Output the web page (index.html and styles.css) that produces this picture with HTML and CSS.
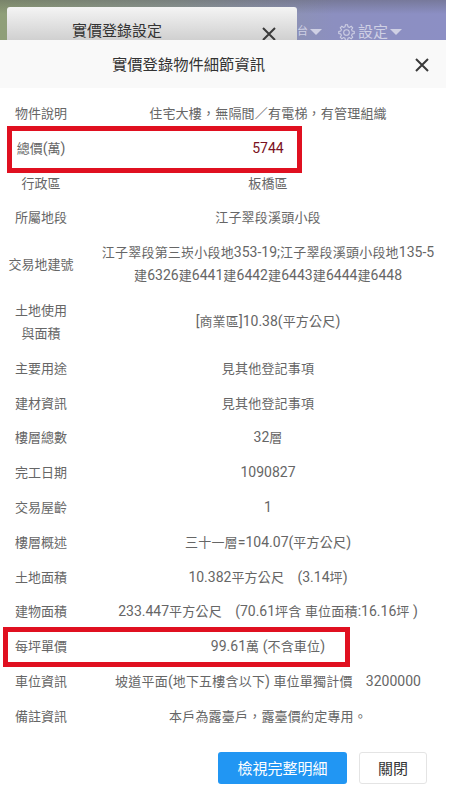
FILE: index.html
```html
<!DOCTYPE html>
<html lang="zh-Hant">
<head>
<meta charset="utf-8">
<title>實價登錄物件細節資訊</title>
<link rel="stylesheet" href="styles.css">
</head>
<body>
<div class="screen">
  <div class="backdrop">
    <div class="back-modal">
      <span class="back-title">實價登錄設定</span>
      <svg class="x back-x" viewBox="0 0 14 14"><path d="M1 1L13 13M13 1L1 13"/></svg>
    </div>
    <div class="back-menu">
      <span class="menu-item small">台<i class="tri"></i></span>
      <span class="menu-item">
        <svg class="gear" viewBox="0 0 24 24"><circle cx="12" cy="12" r="4"/><path d="M20.02 9.85L22.89 10.47L22.89 13.53L20.02 14.15L19.19 16.15L20.78 18.62L18.62 20.78L16.15 19.19L14.15 20.02L13.53 22.89L10.47 22.89L9.85 20.02L7.85 19.19L5.38 20.78L3.22 18.62L4.81 16.15L3.98 14.15L1.11 13.53L1.11 10.47L3.98 9.85L4.81 7.85L3.22 5.38L5.38 3.22L7.85 4.81L9.85 3.98L10.47 1.11L13.53 1.11L14.15 3.98L16.15 4.81L18.62 3.22L20.78 5.38L19.19 7.85Z"/></svg>
        設定<i class="tri"></i>
      </span>
    </div>
  </div>
  <header class="head">
    <h1 class="title">實價登錄物件細節資訊</h1>
    <svg class="x head-x" viewBox="0 0 14 14"><path d="M1 1L13 13M13 1L1 13"/></svg>
  </header>
  <section class="list">
    <div class="row"><div class="key">物件說明</div><div class="val">住宅大樓，無隔間／有電梯，有管理組織</div></div>
    <div class="row"><div class="key">總價<span class="n">(</span>萬<span class="n">)</span></div><div class="val price"><span class="n">5744</span></div><span class="mark mark-a"></span></div>
    <div class="row"><div class="key">行政區</div><div class="val">板橋區</div></div>
    <div class="row"><div class="key">所屬地段</div><div class="val">江子翠段溪頭小段</div></div>
    <div class="row"><div class="key">交易地建號</div><div class="val">江子翠段第三崁小段地<span class="n">353-19;</span>江子翠段溪頭小段地<span class="n">135-5</span><br>建<span class="n">6326</span>建<span class="n">6441</span>建<span class="n">6442</span>建<span class="n">6443</span>建<span class="n">6444</span>建<span class="n">6448</span></div></div>
    <div class="row"><div class="key">土地使用<br>與面積</div><div class="val"><span class="n">[</span>商業區<span class="n">]10.38(</span>平方公尺<span class="n">)</span></div></div>
    <div class="row"><div class="key">主要用途</div><div class="val">見其他登記事項</div></div>
    <div class="row"><div class="key">建材資訊</div><div class="val">見其他登記事項</div></div>
    <div class="row"><div class="key">樓層總數</div><div class="val"><span class="n">32</span>層</div></div>
    <div class="row"><div class="key">完工日期</div><div class="val"><span class="n">1090827</span></div></div>
    <div class="row"><div class="key">交易屋齡</div><div class="val"><span class="n">1</span></div></div>
    <div class="row"><div class="key">樓層概述</div><div class="val">三十一層<span class="n">=104.07(</span>平方公尺<span class="n">)</span></div></div>
    <div class="row"><div class="key">土地面積</div><div class="val"><span class="n">10.382</span>平方公尺　<span class="n">(3.14</span>坪<span class="n">)</span></div></div>
    <div class="row"><div class="key">建物面積</div><div class="val"><span class="n">233.447</span>平方公尺　<span class="n">(70.61</span>坪含 車位面積<span class="n">:16.16</span>坪 <span class="n">)</span></div></div>
    <div class="row"><div class="key">每坪單價</div><div class="val"><span class="n">99.61</span>萬 <span class="n">(</span>不含車位<span class="n">)</span></div><span class="mark mark-b"></span></div>
    <div class="row"><div class="key">車位資訊</div><div class="val">坡道平面<span class="n">(</span>地下五樓含以下<span class="n">)</span> 車位單獨計價　<span class="n">3200000</span></div></div>
    <div class="row"><div class="key">備註資訊</div><div class="val">本戶為露臺戶，露臺價約定專用。</div></div>
  </section>
  <footer class="foot">
    <button class="btn primary">檢視完整明細</button>
    <button class="btn plain">關閉</button>
  </footer>
</div>
</body>
</html>
```
FILE: styles.css
```css
* { box-sizing: border-box; }
html, body { margin: 0; padding: 0; background: #fff; }
body { font-family: Roboto, "Noto Sans CJK TC", sans-serif; color: #666; font-size: 13px; }
.screen { width: 446px; height: 792px; overflow: hidden; background: #fff; }

.backdrop { position: relative; height: 40px; background: linear-gradient(rgba(80, 80, 80, .35), rgba(80, 80, 80, 0) 35%), linear-gradient(90deg, #8f9f78 0%, #8f9a98 40%, #8c8fc0 75%, #8c8fc4 100%); }
.back-modal { position: absolute; left: 7px; top: 7px; width: 290px; height: 33px; border-radius: 3px 3px 0 0; background: linear-gradient(#f4f4f4, #d0d0d0); }
.back-title { position: absolute; left: 65px; top: 13px; font-size: 15px; line-height: 22px; color: #333; }
.back-x { position: absolute; left: 255px; top: 20px; }
.back-menu { position: absolute; left: 297px; top: 22px; display: flex; gap: 15px; color: #cfd0e4; font-size: 15px; line-height: 20px; }
.menu-item { display: flex; align-items: center; }
.small { font-size: 11px; width: 26px; }
.tri { width: 0; height: 0; border-left: 6.5px solid transparent; border-right: 6.5px solid transparent; border-top: 6px solid #cfd0e4; margin-left: 2px; }
.gear { width: 17px; height: 17px; margin-right: 3px; fill: none; stroke: #cfd0e4; stroke-width: 1.5; }

.x { width: 14px; height: 14px; fill: none; stroke: #3a3a3a; stroke-width: 2; }
.head { position: relative; height: 48px; background: #f9f9f9; display: flex; align-items: center; }
.title { margin: 2px 0 0; width: 377px; text-align: center; font-size: 15.3px; font-weight: 400; line-height: 22px; color: #333; }
.head-x { position: absolute; left: 415px; top: 18px; }

.list { padding-top: 8px; }
.row { position: relative; display: grid; grid-template-columns: 82px 1fr; align-items: center; line-height: 23px; padding: 6px 0 5.8px; text-align: center; }
.n { font-size: 14px; line-height: 1; letter-spacing: 0; }
.val { margin-left: 4px; margin-right: -4px; white-space: nowrap; letter-spacing: .2px; }
.price { color: #7a1020; }
.mark { position: absolute; border: 5px solid #e01020; pointer-events: none; }
.mark-a { left: 7px; top: -4.8px; width: 295px; height: 47px; }
.mark-b { left: 3px; top: -2.2px; width: 347px; height: 40px; }

.foot { display: flex; gap: 12px; padding: 18.4px 0 0 218px; }
.btn { height: 32px; border-radius: 3px; font-family: inherit; font-size: 15px; padding: 0; }
.primary { width: 129px; background: #2196f3; color: #fff; border: 0; }
.plain { width: 68px; background: #fff; color: #333; border: 1px solid #e4e4e4; }
```
